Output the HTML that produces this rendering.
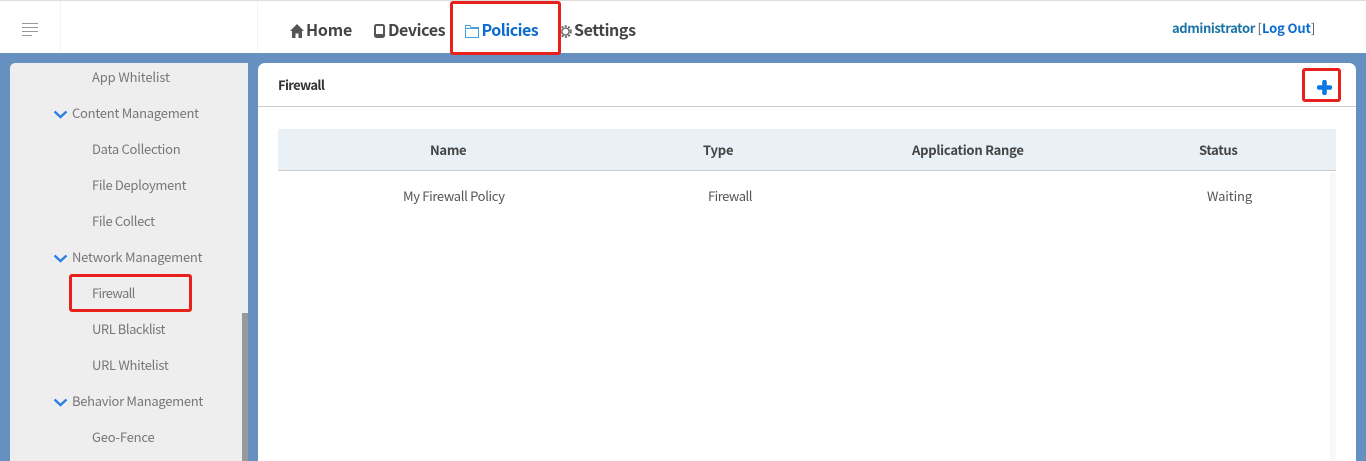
<!DOCTYPE html>
<html><head><meta charset="utf-8">
<style>
html,body{margin:0;padding:0;width:1366px;height:461px;overflow:hidden;background:#6590bf}
body{position:relative;font-family:"Noto Sans CJK SC","Liberation Sans",sans-serif;font-size:13px}
div,span,svg{position:absolute}
.t{white-space:nowrap;line-height:18px}
.s{color:#777;font-size:13px}
.h{color:#444;font-size:13px;font-weight:700}
.n{color:#444;font-size:16px;font-weight:700;line-height:20px}
.r{border:3px solid #e8201c;border-radius:3px;box-sizing:border-box}
</style></head><body>
<div style="left:0;top:0;width:1366px;height:53px;background:#fff;border-top:1px solid #ddd;box-sizing:border-box"></div>
<div style="left:60px;top:1px;width:1px;height:52px;background:#f4f4f4"></div>
<div style="left:257px;top:1px;width:1px;height:52px;background:#f4f4f4"></div>
<svg style="left:22px;top:23px" width="16" height="13" viewBox="0 0 16 13"><path d="M0 .5H16M0 4.5H16M0 8.5H16M0 12.5H10" stroke="#999" fill="none"/></svg>

<svg style="left:290px;top:24px" width="14" height="14" viewBox="0 0 14 14"><path d="M7 0L14 7H12V14H8.5V9.5H5.5V14H2V7H0Z" fill="#555"/></svg>
<div class="t n" style="left:306px;top:19px;letter-spacing:-.2px">Home</div>
<svg style="left:374px;top:24px" width="11" height="14" viewBox="0 0 11 14"><rect x="1" y="1" width="9" height="12" rx="1.5" fill="#fff" stroke="#555" stroke-width="2"/><path d="M1 10H10V13H1Z" fill="#555"/></svg>
<div class="t n" style="left:388px;top:19px;letter-spacing:-.4px">Devices</div>
<svg style="left:465px;top:25px" width="14" height="13" viewBox="0 0 14 13"><path d="M.5 12.5V.5H5L6 2.5H13.5V12.5Z" fill="#fff" stroke="#4a9fe0"/><path d="M1 3.5H13" stroke="#4a9fe0"/></svg>
<div class="t n" style="left:481.5px;top:19px;color:#0a6ccf;letter-spacing:-.5px">Policies</div>
<svg style="left:559px;top:25px" width="13" height="13" viewBox="0 0 13 13"><circle cx="6.5" cy="6.5" r="3.6" fill="none" stroke="#666" stroke-width="1.4"/><circle cx="6.5" cy="6.5" r="5.4" fill="none" stroke="#666" stroke-width="1.8" stroke-dasharray="2 1.5"/></svg>
<div class="t n" style="left:574px;top:19px;letter-spacing:-.4px">Settings</div>
<div class="r" style="left:450px;top:1px;width:111px;height:54px"></div>
<div class="t" style="left:1172px;top:19px;font-weight:700;color:#1b74a8;font-size:13px;letter-spacing:-.4px">administrator <span style="position:static;color:#555;font-weight:400;letter-spacing:0">[</span><span style="position:static;color:#0a6ccf;letter-spacing:-.15px">Log Out</span><span style="position:static;color:#555;font-weight:400">]</span></div>

<div style="left:10px;top:63px;width:238px;height:398px;background:#eee;border-radius:5px 0 0 0"></div>
<div style="left:242px;top:313px;width:6px;height:148px;background:#999"></div>
<div class="t s" style="left:92px;top:68px;letter-spacing:-.15px">App Whitelist</div>
<div class="t s" style="left:72px;top:104px;letter-spacing:-.25px">Content Management</div>
<div class="t s" style="left:92px;top:140px;letter-spacing:-.27px">Data Collection</div>
<div class="t s" style="left:92px;top:176px;letter-spacing:-.33px">File Deployment</div>
<div class="t s" style="left:92px;top:212px;letter-spacing:-.33px">File Collect</div>
<div class="t s" style="left:72px;top:248px;letter-spacing:-.22px">Network Management</div>
<div class="t s" style="left:92px;top:284px;letter-spacing:-.65px">Firewall</div>
<div class="t s" style="left:92px;top:320px;letter-spacing:-.46px">URL Blacklist</div>
<div class="t s" style="left:92px;top:356px;letter-spacing:-.3px">URL Whitelist</div>
<div class="t s" style="left:72px;top:392px;letter-spacing:-.3px">Behavior Management</div>
<div class="t s" style="left:92px;top:428px;letter-spacing:-.2px">Geo-Fence</div>
<svg style="left:53px;top:110px" width="15" height="9" viewBox="0 0 15 9"><path d="M1.5 1.5L7.5 7L13.5 1.5" fill="none" stroke="#2f7fe0" stroke-width="2.4"/></svg>
<svg style="left:53px;top:254px" width="15" height="9" viewBox="0 0 15 9"><path d="M1.5 1.5L7.5 7L13.5 1.5" fill="none" stroke="#2f7fe0" stroke-width="2.4"/></svg>
<svg style="left:53px;top:398px" width="15" height="9" viewBox="0 0 15 9"><path d="M1.5 1.5L7.5 7L13.5 1.5" fill="none" stroke="#2f7fe0" stroke-width="2.4"/></svg>
<div class="r" style="left:69px;top:274px;width:123px;height:38px"></div>

<div style="left:258px;top:63px;width:1098px;height:398px;background:#fff;border-radius:7px 7px 0 0"></div>
<div style="left:258px;top:106px;width:1098px;height:1px;background:#ccc"></div>
<div class="t h" style="left:278px;top:76px;color:#333;letter-spacing:-.65px">Firewall</div>
<div class="r" style="left:1302px;top:68px;width:39px;height:34px"></div>
<svg style="left:1317px;top:80px" width="15" height="15" viewBox="0 0 15 15"><path d="M7.5 2V13M2 7.5H13" stroke="#0a78e0" stroke-width="4.6" stroke-linecap="round"/></svg>

<div style="left:278px;top:129px;width:1058px;height:41px;background:#e9f0f6"></div>
<div style="left:278px;top:170px;width:1058px;height:1px;background:#ccc"></div>
<div style="left:1330px;top:173px;width:6px;height:288px;background:#f8f8f8"></div>
<div class="t h" style="left:430px;top:141px;letter-spacing:-.3px">Name</div>
<div class="t h" style="left:703px;top:141px;letter-spacing:-.2px">Type</div>
<div class="t h" style="left:912px;top:141px;letter-spacing:-.25px">Application Range</div>
<div class="t h" style="left:1199px;top:141px;letter-spacing:-.35px">Status</div>
<div class="t" style="left:403px;top:187px;color:#555;letter-spacing:-.33px">My Firewall Policy</div>
<div class="t" style="left:708px;top:187px;color:#555;letter-spacing:-.5px">Firewall</div>
<div class="t" style="left:1207px;top:187px;color:#555;letter-spacing:-.1px">Waiting</div>
</body></html>
